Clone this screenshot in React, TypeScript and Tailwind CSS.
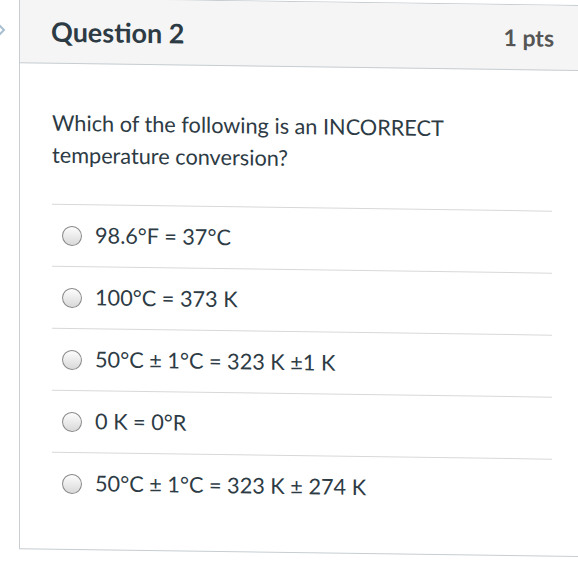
import React from "react";

const options = [
  "98.6°F = 37°C",
  "100°C = 373 K",
  "50°C ± 1°C = 323 K ±1 K",
  "0 K = 0°R",
  "50°C ± 1°C = 323 K ± 274 K",
];

const Radio = () => (
  <span className="inline-block w-[20px] h-[20px] rounded-full border border-[#8a8a8a] bg-gradient-to-b from-[#fdfdfd] to-[#d9d9d9] shrink-0" />
);

export default function App() {
  return (
    <div className="w-[578px] h-[585px] bg-white overflow-hidden font-['Lato',sans-serif]">
      <div className="flex skew-y-[0.8deg] origin-center w-[578px] h-[585px]">
        <div className="w-[19px] shrink-0 pt-[28px]">
          <svg width="8" height="12" viewBox="0 0 8 12" className="-ml-[2px]">
            <path d="M1 1 L6 6 L1 11" fill="none" stroke="#a9bfd1" strokeWidth="2" />
          </svg>
        </div>
        <div className="mt-[1px] w-[566px] h-[552px] shrink-0 border border-[#c7cdd1] bg-white">
          <div className="h-[65px] bg-[#f5f5f5] border-b border-[#c7cdd1] flex items-center justify-between pl-[31px] pr-[30px]">
            <h2 className="text-[27px] font-bold text-[#2d3b45] leading-none">Question 2</h2>
            <span className="text-[23px] font-bold text-[#555555] leading-none">1 pts</span>
          </div>
          <div className="pl-[32px] pr-[32px] pt-[43px]">
            <p className="text-[21.7px] leading-[32px] text-[#2d3b45] whitespace-nowrap">
              Which of the following is an INCORRECT
              <br />
              temperature conversion?
            </p>
            <div className="mt-[33px]">
              {options.map((o) => (
                <div
                  key={o}
                  className="h-[62px] border-t border-[#d8d8d8] flex items-center gap-[13px] pl-[10px]"
                >
                  <Radio />
                  <span className="text-[21.7px] text-[#2d3b45]">{o}</span>
                </div>
              ))}
            </div>
          </div>
        </div>
      </div>
    </div>
  );
}
